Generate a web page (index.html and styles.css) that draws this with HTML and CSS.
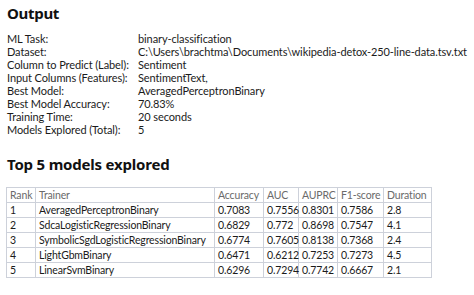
FILE: index.html
```html
<!DOCTYPE html>
<html>
<head>
<meta charset="utf-8">
<link rel="stylesheet" href="styles.css">
</head>
<body>
<div class="page">
  <h1 class="title">Output</h1>
  <div class="info">
    <div>ML Task:</div><div>binary-classification</div>
    <div>Dataset:</div><div>C:\Users\brachtma\Documents\wikipedia-detox-250-line-data.tsv.txt</div>
    <div>Column to Predict (Label):</div><div>Sentiment</div>
    <div>Input Columns (Features):</div><div>SentimentText,</div>
    <div>Best Model:</div><div>AveragedPerceptronBinary</div>
    <div>Best Model Accuracy:</div><div>70.83%</div>
    <div>Training Time:</div><div>20 seconds</div>
    <div>Models Explored (Total):</div><div>5</div>
  </div>
  <h2 class="title2">Top 5 models explored</h2>
  <table class="models">
    <colgroup>
      <col class="c-rank"><col class="c-trainer"><col class="c-acc"><col class="c-auc"><col class="c-auprc"><col class="c-f1"><col class="c-dur">
    </colgroup>
    <thead>
      <tr><th>Rank</th><th>Trainer</th><th>Accuracy</th><th>AUC</th><th>AUPRC</th><th>F1-score</th><th>Duration</th></tr>
    </thead>
    <tbody>
      <tr><td>1</td><td>AveragedPerceptronBinary</td><td>0.7083</td><td>0.7556</td><td>0.8301</td><td>0.7586</td><td>2.8</td></tr>
      <tr><td>2</td><td>SdcaLogisticRegressionBinary</td><td>0.6829</td><td>0.772</td><td>0.8698</td><td>0.7547</td><td>4.1</td></tr>
      <tr><td>3</td><td>SymbolicSgdLogisticRegressionBinary</td><td>0.6774</td><td>0.7605</td><td>0.8138</td><td>0.7368</td><td>2.4</td></tr>
      <tr><td>4</td><td>LightGbmBinary</td><td>0.6471</td><td>0.6212</td><td>0.7253</td><td>0.7273</td><td>4.5</td></tr>
      <tr><td>5</td><td>LinearSvmBinary</td><td>0.6296</td><td>0.7294</td><td>0.7742</td><td>0.6667</td><td>2.1</td></tr>
    </tbody>
  </table>
</div>
</body>
</html>
```
FILE: styles.css
```css
html, body {
  margin: 0;
  padding: 0;
  background: #ffffff;
}
body {
  font-family: Lato, "Noto Sans", sans-serif;
  color: #1b1b1b;
}
.page {
  padding: 3px 7px 0 7px;
}
.title {
  margin: 0;
  font-family: "Noto Sans", sans-serif;
  font-size: 15px;
  font-weight: 700;
  line-height: 20px;
  letter-spacing: -0.3px;
  color: #111;
}
.info {
  margin-top: 9px;
  display: grid;
  grid-template-columns: 131px auto;
  font-size: 11px;
  line-height: 13px;
  letter-spacing: -0.1px;
  white-space: nowrap;
}
.title2 {
  margin: 18px 0 0 0;
  font-family: "Noto Sans", sans-serif;
  font-size: 15px;
  font-weight: 700;
  line-height: 20px;
  letter-spacing: -0.2px;
  color: #111;
}
.models {
  margin-top: 13px;
  margin-left: -1px;
  border-collapse: collapse;
  font-size: 10.5px;
  letter-spacing: -0.15px;
  table-layout: fixed;
  width: 425px;
}
.models th, .models td {
  border: 1px solid #cdd1da;
  padding: 0 0 0 3px;
  height: 14px;
  line-height: 14px;
  text-align: left;
  white-space: nowrap;
  overflow: visible;
}
.models th {
  font-weight: 400;
  color: #6a6a6a;
}
.c-rank { width: 29px; }
.c-trainer { width: 179px; }
.c-acc { width: 49px; }
.c-auc { width: 35px; }
.c-auprc { width: 39px; }
.c-f1 { width: 46px; }
.c-dur { width: 48px; }
```
